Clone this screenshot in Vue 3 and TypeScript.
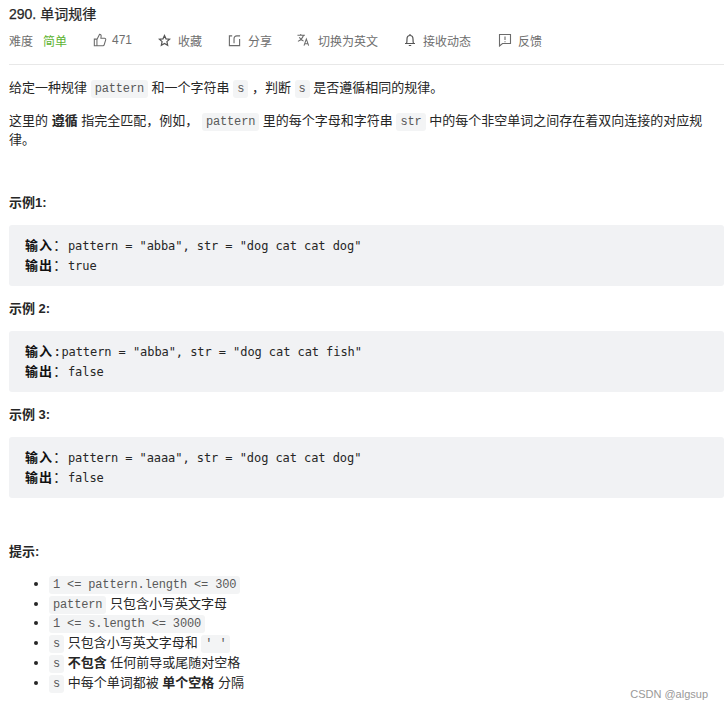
<script setup lang="ts">
interface Example {
  title: string
  input: string
  sep: string
  output: string
}
const examples: Example[] = [
  { title: '示例1:', input: 'pattern = "abba", str = "dog cat cat dog"', sep: '：', output: 'true' },
  { title: '示例 2:', input: 'pattern = "abba", str = "dog cat cat fish"', sep: ':', output: 'false' },
  { title: '示例 3:', input: 'pattern = "aaaa", str = "dog cat cat dog"', sep: '：', output: 'false' },
]
</script>

<template>
  <main class="page">
    <header class="head">
      <h1 class="title">290. 单词规律</h1>
      <div class="meta">
        <span class="item level">难度<b class="easy">简单</b></span>
        <span class="item like">
          <svg width="14" height="14" viewBox="0 0 16 16" fill="none" stroke="#6b6b6b" stroke-width="1.2"><path d="M1.500 7h3v7.500h-3zM4.500 7.500 7.500 1.500c1.300 0 2 .9 1.800 2.200L9 6h4.200c1 0 1.600.9 1.300 1.800l-1.700 5.600c-.2.7-.7 1.100-1.400 1.100H4.500"/></svg>
          471
        </span>
        <span class="item fav">
          <svg width="13" height="13" viewBox="0 0 14 14" fill="none" stroke="#555" stroke-width="1.300"><path d="M7 1.600 8.600 5.200l3.900.4-2.900 2.600.8 3.900L7 10.100l-3.400 2 .8-3.900L1.500 5.600l3.900-.4z"/></svg>
          收藏
        </span>
        <span class="item share">
          <svg width="13" height="13" viewBox="0 0 14 14" fill="none" stroke="#6b6b6b" stroke-width="1.200"><path d="M4.500 2H1.500v10.500h11V5.500M6.500 10V5c0-1.800 1.200-3 3-3h3.500"/></svg>
          分享
        </span>
        <span class="item lang">
          <svg width="14" height="14" viewBox="0 0 15 15" fill="none" stroke="#6b6b6b" stroke-width="1.100"><path d="M.5 2.500h8M4 1v1.500M7 2.500C6 5.500 4 7.500 1 9M2.500 4.500C3.500 6.500 5 8 7 8.500M7.500 13.500l2.500-7 2.500 7M8.400 11.500h3.400"/></svg>
          切换为英文
        </span>
        <span class="item notify">
          <svg width="12" height="14" viewBox="0 0 12 14" fill="none" stroke="#555" stroke-width="1.200"><path d="M1 10.500h10M2.500 10.500C3 9.500 3 8 3 6c0-2 1.300-3.500 3-3.500S9 4 9 6c0 2 0 3.500.5 4.500M6 1v1.500M4.800 12.500h2.400"/></svg>
          接收动态
        </span>
        <span class="item feedback">
          <svg width="14" height="14" viewBox="0 0 14 14" fill="none" stroke="#6b6b6b" stroke-width="1.100"><path d="M1.500 1.500h11v9H4.500L1.500 13zM7 3.500v3.500M7 8.200v1"/></svg>
          反馈
        </span>
      </div>
    </header>

    <section class="body">
      <p class="first">给定一种规律 <code>pattern</code> 和一个字符串 <code>s</code> ，判断 <code>s</code> 是否遵循相同的规律。</p>
      <p class="second">这里的 <strong>遵循</strong> 指完全匹配，例如， <code>pattern</code> 里的每个字母和字符串 <code>str</code> 中的每个非空单词之间存在着双向连接的对应规律。</p>

      <template v-for="(ex, i) in examples" :key="ex.title">
        <p class="ex-title" :class="{ 'ex-first': i === 0 }"><strong>{{ ex.title }}</strong></p>
        <pre class="sample"><strong>输入</strong><span class="sep" :class="{ wide: ex.sep === '：' }">{{ ex.sep }}</span>{{ ex.input }}
<strong>输出</strong><span class="sep wide">：</span>{{ ex.output }}</pre>
      </template>

      <p class="hint-title"><strong>提示:</strong></p>
      <ul class="hints">
        <li><code>1 &lt;= pattern.length &lt;= 300</code></li>
        <li><code>pattern</code> 只包含小写英文字母</li>
        <li><code>1 &lt;= s.length &lt;= 3000</code></li>
        <li><code>s</code> 只包含小写英文字母和 <code>' '</code></li>
        <li><code>s</code> <strong>不包含</strong> 任何前导或尾随对空格</li>
        <li><code>s</code> 中每个单词都被 <strong>单个空格</strong> 分隔</li>
      </ul>
    </section>
    <div class="mark">CSDN @algsup</div>
  </main>
</template>

<style>
html, body { margin: 0; background: #fff; }
</style>

<style scoped>
.page {
  position: relative;
  width: 724px;
  height: 710px;
  overflow: hidden;
  box-sizing: border-box;
  padding: 0 0 0 9px;
  font-family: "Liberation Sans", "Noto Sans CJK SC", sans-serif;
  font-size: 13px;
  color: #262626;
  background: #fff;
}
.head { height: 65px; border-bottom: 1px solid #e8e8e8; box-sizing: border-box; }
.title { margin: 0; padding-top: 4px; font-size: 14px; font-weight: 400; line-height: 20px; color: #262626; -webkit-text-stroke: .25px #262626; }
.meta { display: flex; align-items: center; margin-top: 6px; height: 20px; font-size: 12px; color: #6e6e6e; }
.item { display: inline-flex; align-items: center; gap: 7px; flex: none; }
.level { width: 84px; gap: 0; }
.easy { font-weight: 400; color: #5cb32f; margin-left: 10px; }
.like { width: 65px; gap: 5px; }
.fav { width: 70px; gap: 7px; }
.share { width: 69px; gap: 7px; }
.lang { width: 107px; gap: 7px; }
.notify { width: 94px; gap: 7px; }
.feedback { gap: 6px; }
.body p { margin: 0; line-height: 19px; }
.first { padding-top: 13px; }
.second { padding-top: 14px; }
code {
  font-family: "Liberation Mono", monospace;
  font-size: 12px;
  line-height: 1;
  letter-spacing: -.15px;
  color: #595959;
  background: #f3f4f5;
  border-radius: 3px;
  padding: 2px 4px;
}
.ex-title { padding-top: 13px; font-size: 13px; }
.ex-first { padding-top: 44px; }
.sample {
  margin: 13px 0 0;
  width: 715px;
  box-sizing: border-box;
  height: 61px;
  padding: 11px 16px 0;
  background: #f1f2f4;
  border-radius: 3px;
  font-family: "DejaVu Sans Mono", "Noto Sans CJK SC", monospace;
  font-size: 12px;
  letter-spacing: -.07px;
  line-height: 20px;
  color: #262626;
}
.sample strong { font-size: 13px; letter-spacing: 1px; font-weight: 700; color: #111; }
.sep { font-size: 14px; line-height: 1; }
.wide { margin-right: 1px; }
.hint-title { padding-top: 44px; }
.hints { margin: 13px 0 0; padding: 0 0 0 40px; }
.hints li { line-height: 19.700px; }
.mark {
  position: absolute;
  right: 16px;
  top: 687px;
  font-size: 11px;
  line-height: 14px;
  color: #999;
}
</style>
